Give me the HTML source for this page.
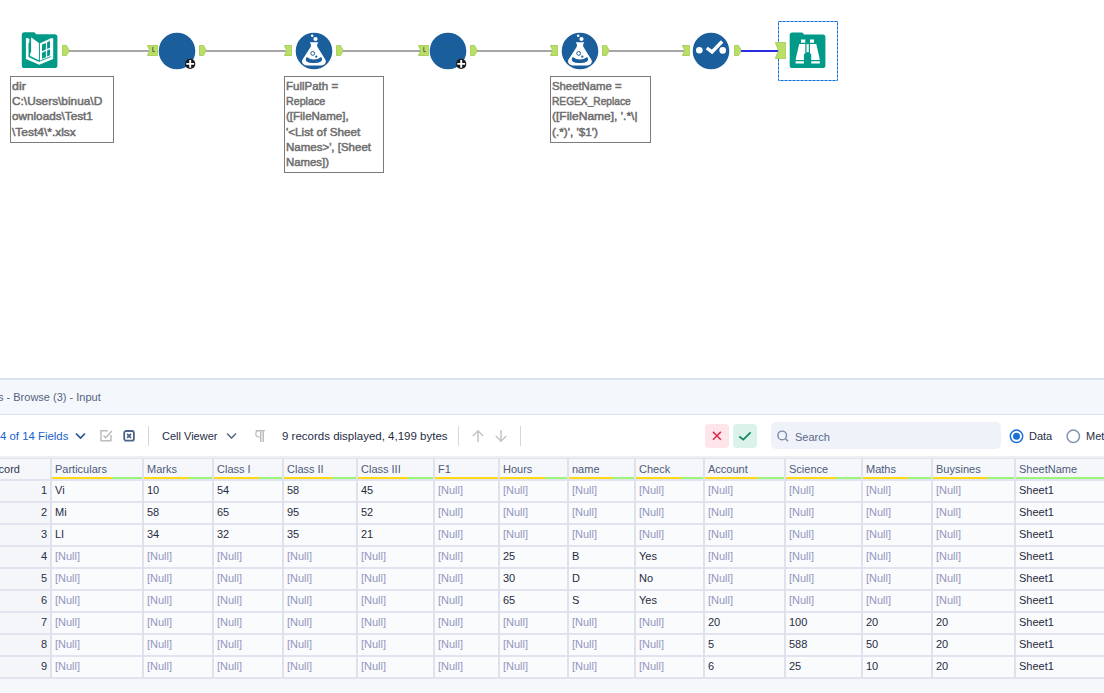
<!DOCTYPE html>
<html><head><meta charset="utf-8"><style>
html,body{margin:0;padding:0;width:1104px;height:693px;overflow:hidden;background:#fff;position:relative;font-family:'Liberation Sans', sans-serif}
</style></head><body>
<svg style="position:absolute;left:21px;top:32px" width="37" height="37" viewBox="0 0 37 37">
<path d="M0.8 3 Q0.8 0.2 3.6 0.2 H12.8 Q14.4 0.2 15 2.2 H33.6 Q36.4 2.2 36.4 5 V33.4 Q36.4 36.1 33.6 36.1 H3.6 Q0.8 36.1 0.8 33.4 Z" fill="#019a88"/>
<path d="M4.9 6.2 H7.5 V25.0 L18.2 29.9 L29.6 25.0 V6.2 H32.2 V27.1 L18.2 32.8 L4.9 27.1 Z" fill="#fff"/>
<path d="M5 6.2 L8.4 7.0 V10.6 L7.4 11.2 Z" fill="#fff"/>
<path d="M10.1 5.3 L17.9 10.9 V28.2 L9.2 24.1 V21 L10.1 20.2 Z" fill="#fff"/>
<path d="M18.9 11.3 L30.0 6.2 V25.4 L18.9 30.0 Z" fill="#fff"/>
<path d="M21.0 12.6 L24.9 10.9 V17.6 L21.0 19.2 Z M26.1 10.3 L29.0 9.0 V15.7 L26.1 16.9 Z M21.0 20.7 L24.9 19.1 V25.2 L21.0 26.8 Z M26.1 18.5 L29.0 17.3 V23.2 L26.1 24.4 Z" fill="#019a88"/>
<path d="M19.3 28.9 L29.7 24.6" stroke="#019a88" stroke-width="0.9"/>
</svg><svg style="position:absolute;left:62px;top:45px" width="8" height="11" viewBox="0 0 8 11"><path d="M0.5 0.5 H4.5 L7.3 5.5 L4.5 10.5 H0.5 Z" fill="#b9df66" stroke="#9fc84e" stroke-width="0.8"/></svg><div style="position:absolute;left:69px;top:50px;width:80px;height:2px;background:#a6a6a6"></div><svg style="position:absolute;left:147px;top:45px" width="11" height="11" viewBox="0 0 11 11"><path d="M0.3 0.5 H10.7 V10.5 H0.3 L2.8 5.5 Z" fill="#b9df66" stroke="#9fc84e" stroke-width="0.8"/><path d="M5.8 2.0 V6.6 H7.9" stroke="#4a5a48" stroke-width="0.9" fill="none"/></svg><svg style="position:absolute;left:156.6px;top:30.5px;overflow:visible" width="40" height="40" viewBox="0 0 40 40"><circle cx="20" cy="20" r="18.3" fill="#1a5e9c"/><circle cx="33.2" cy="32.9" r="5.1" fill="#1b1b1b"/><path d="M29.3 32.9 H37.1 M33.2 29.1 V36.7" stroke="#fff" stroke-width="1.9"/></svg><svg style="position:absolute;left:199px;top:45px" width="8" height="11" viewBox="0 0 8 11"><path d="M0.5 0.5 H4.5 L7.3 5.5 L4.5 10.5 H0.5 Z" fill="#b9df66" stroke="#9fc84e" stroke-width="0.8"/></svg><div style="position:absolute;left:206px;top:50px;width:80px;height:2px;background:#a6a6a6"></div><svg style="position:absolute;left:284px;top:45px" width="8" height="11" viewBox="0 0 8 11"><path d="M0.3 0.5 H7.7 V10.5 H0.3 L2.8 5.5 Z" fill="#b9df66" stroke="#9fc84e" stroke-width="0.8"/></svg><svg style="position:absolute;left:293.6px;top:30.5px;overflow:visible" width="40" height="40" viewBox="0 0 40 40"><circle cx="20" cy="20" r="18.3" fill="#1a5e9c"/><circle cx="18.2" cy="4.8" r="1.3" fill="#fff"/><circle cx="21.5" cy="8.0" r="2.1" fill="#fff"/><path d="M16.0 11.2 H24.1 V12.6 H23.2 V15.5 L31.4 28.8 Q32.6 31.5 30.5 33.3 Q29 34.5 26.5 34.5 H13.5 Q11 34.5 9.5 33.3 Q7.2 31.5 8.4 28.8 L16.9 15.5 V12.6 H16.0 Z" fill="#fff"/><path d="M12.8 25.9 Q19.8 31.3 27.2 25.9 Q29.0 28.5 27.0 30.5 Q24 32.2 19.6 32.0 Q15.2 32.2 12.6 30.5 Q10.8 28.5 12.8 25.9 Z" fill="#1a5e9c"/><circle cx="18.7" cy="22.4" r="1.9" fill="none" stroke="#1a5e9c" stroke-width="1"/><circle cx="22.3" cy="25.7" r="1.1" fill="#1a5e9c"/></svg><svg style="position:absolute;left:336px;top:45px" width="8" height="11" viewBox="0 0 8 11"><path d="M0.5 0.5 H4.5 L7.3 5.5 L4.5 10.5 H0.5 Z" fill="#b9df66" stroke="#9fc84e" stroke-width="0.8"/></svg><div style="position:absolute;left:343px;top:50px;width:78px;height:2px;background:#a6a6a6"></div><svg style="position:absolute;left:418px;top:45px" width="11" height="11" viewBox="0 0 11 11"><path d="M0.3 0.5 H10.7 V10.5 H0.3 L2.8 5.5 Z" fill="#b9df66" stroke="#9fc84e" stroke-width="0.8"/><path d="M5.8 2.0 V6.6 H7.9" stroke="#4a5a48" stroke-width="0.9" fill="none"/></svg><svg style="position:absolute;left:427.6px;top:30.5px;overflow:visible" width="40" height="40" viewBox="0 0 40 40"><circle cx="20" cy="20" r="18.3" fill="#1a5e9c"/><circle cx="33.2" cy="32.9" r="5.1" fill="#1b1b1b"/><path d="M29.3 32.9 H37.1 M33.2 29.1 V36.7" stroke="#fff" stroke-width="1.9"/></svg><svg style="position:absolute;left:470px;top:45px" width="8" height="11" viewBox="0 0 8 11"><path d="M0.5 0.5 H4.5 L7.3 5.5 L4.5 10.5 H0.5 Z" fill="#b9df66" stroke="#9fc84e" stroke-width="0.8"/></svg><div style="position:absolute;left:477px;top:50px;width:75px;height:2px;background:#a6a6a6"></div><svg style="position:absolute;left:550px;top:45px" width="8" height="11" viewBox="0 0 8 11"><path d="M0.3 0.5 H7.7 V10.5 H0.3 L2.8 5.5 Z" fill="#b9df66" stroke="#9fc84e" stroke-width="0.8"/></svg><svg style="position:absolute;left:559.5px;top:30.5px;overflow:visible" width="40" height="40" viewBox="0 0 40 40"><circle cx="20" cy="20" r="18.3" fill="#1a5e9c"/><circle cx="18.2" cy="4.8" r="1.3" fill="#fff"/><circle cx="21.5" cy="8.0" r="2.1" fill="#fff"/><path d="M16.0 11.2 H24.1 V12.6 H23.2 V15.5 L31.4 28.8 Q32.6 31.5 30.5 33.3 Q29 34.5 26.5 34.5 H13.5 Q11 34.5 9.5 33.3 Q7.2 31.5 8.4 28.8 L16.9 15.5 V12.6 H16.0 Z" fill="#fff"/><path d="M12.8 25.9 Q19.8 31.3 27.2 25.9 Q29.0 28.5 27.0 30.5 Q24 32.2 19.6 32.0 Q15.2 32.2 12.6 30.5 Q10.8 28.5 12.8 25.9 Z" fill="#1a5e9c"/><circle cx="18.7" cy="22.4" r="1.9" fill="none" stroke="#1a5e9c" stroke-width="1"/><circle cx="22.3" cy="25.7" r="1.1" fill="#1a5e9c"/></svg><svg style="position:absolute;left:602px;top:45px" width="8" height="11" viewBox="0 0 8 11"><path d="M0.5 0.5 H4.5 L7.3 5.5 L4.5 10.5 H0.5 Z" fill="#b9df66" stroke="#9fc84e" stroke-width="0.8"/></svg><div style="position:absolute;left:609px;top:50px;width:75px;height:2px;background:#a6a6a6"></div><svg style="position:absolute;left:682px;top:45px" width="8" height="11" viewBox="0 0 8 11"><path d="M0.3 0.5 H7.7 V10.5 H0.3 L2.8 5.5 Z" fill="#b9df66" stroke="#9fc84e" stroke-width="0.8"/></svg><svg style="position:absolute;left:691.4px;top:30.5px;overflow:visible" width="40" height="40" viewBox="0 0 40 40"><circle cx="20" cy="20" r="18.3" fill="#1a5e9c"/><circle cx="8.3" cy="19.2" r="3.3" fill="#fff"/><circle cx="31.7" cy="19.4" r="3.3" fill="#fff"/><path d="M15.8 17.0 L21.0 20.9 L31.1 10.5" stroke="#fff" stroke-width="3.4" fill="none" stroke-linecap="butt" stroke-linejoin="miter"/></svg><svg style="position:absolute;left:734px;top:45px" width="8" height="11" viewBox="0 0 8 11"><path d="M0.5 0.5 H4.5 L7.3 5.5 L4.5 10.5 H0.5 Z" fill="#b9df66" stroke="#9fc84e" stroke-width="0.8"/></svg><div style="position:absolute;left:741px;top:50px;width:38px;height:2px;background:#2b2de3"></div><svg style="position:absolute;left:770px;top:15px" width="80" height="75" viewBox="770 15 80 75"><rect x="778.5" y="21.5" width="59" height="59" fill="none" stroke="#c4ddf8" stroke-width="1"/><rect x="778.5" y="21.5" width="59" height="59" fill="none" stroke="#0f72e0" stroke-width="1" stroke-dasharray="3 1"/></svg><svg style="position:absolute;left:775px;top:42px" width="11" height="17" viewBox="0 0 11 17"><path d="M0.3 0.5 H10.7 V16.5 H0.3 L3.5 8.5 Z" fill="#b9df66" stroke="#9fc84e" stroke-width="0.8"/></svg><svg style="position:absolute;left:789px;top:32px" width="37" height="37" viewBox="0 0 37 37">
<path d="M0.7 3.2 Q0.7 0.6 3.3 0.6 H12.6 Q14.2 0.6 14.9 2.6 H33.8 Q36.4 2.6 36.4 5.2 V33.5 Q36.4 36.1 33.8 36.1 H3.3 Q0.7 36.1 0.7 33.5 Z" fill="#019a88"/>
<path d="M12 7.5 H16.3 V10.7 H12 Z M21 7.5 H25 V10.7 H21 Z" fill="#fff"/>
<path d="M10.2 11.9 H16.3 V21.8 H14.9 V28.1 H6.8 V26.5 Z" fill="#fff"/>
<path d="M21 11.9 H27.3 L30.6 26.5 V28.1 H22.2 V21.8 H21 Z" fill="#fff"/>
<path d="M17.5 12.2 H19.8 V20.2 H17.5 Z" fill="#fff"/>
<path d="M6.6 29.3 H14.9 V31.5 H6.6 Z M22.2 29.3 H30.8 V31.5 H22.2 Z" fill="#fff"/>
</svg><div style="position:absolute;left:10px;top:76px;width:104px;height:67px;border:1px solid #7b7b7b;box-sizing:border-box"></div><div style="position:absolute;left:12px;top:79.0px;font:11.5px 'Liberation Sans', sans-serif;-webkit-text-stroke:0.5px #6e6e6e;color:#6e6e6e;white-space:nowrap;line-height:15px;transform:scaleX(1.08);transform-origin:0 0">dir</div><div style="position:absolute;left:12px;top:94.2px;font:11.5px 'Liberation Sans', sans-serif;-webkit-text-stroke:0.5px #6e6e6e;color:#6e6e6e;white-space:nowrap;line-height:15px;transform:scaleX(1.03);transform-origin:0 0">C:\Users\binua\D</div><div style="position:absolute;left:12px;top:109.4px;font:11.5px 'Liberation Sans', sans-serif;-webkit-text-stroke:0.5px #6e6e6e;color:#6e6e6e;white-space:nowrap;line-height:15px;transform:scaleX(1.02);transform-origin:0 0">ownloads\Test1</div><div style="position:absolute;left:12px;top:124.6px;font:11.5px 'Liberation Sans', sans-serif;-webkit-text-stroke:0.5px #6e6e6e;color:#6e6e6e;white-space:nowrap;line-height:15px;transform:scaleX(1.04);transform-origin:0 0">\Test4\*.xlsx</div><div style="position:absolute;left:284px;top:76px;width:100px;height:97px;border:1px solid #7b7b7b;box-sizing:border-box"></div><div style="position:absolute;left:286px;top:79.0px;font:11.5px 'Liberation Sans', sans-serif;-webkit-text-stroke:0.5px #6e6e6e;color:#6e6e6e;white-space:nowrap;line-height:15px;transform:scaleX(1.0);transform-origin:0 0">FullPath =</div><div style="position:absolute;left:286px;top:94.2px;font:11.5px 'Liberation Sans', sans-serif;-webkit-text-stroke:0.5px #6e6e6e;color:#6e6e6e;white-space:nowrap;line-height:15px;transform:scaleX(0.93);transform-origin:0 0">Replace</div><div style="position:absolute;left:286px;top:109.4px;font:11.5px 'Liberation Sans', sans-serif;-webkit-text-stroke:0.5px #6e6e6e;color:#6e6e6e;white-space:nowrap;line-height:15px;transform:scaleX(1.0);transform-origin:0 0">([FileName],</div><div style="position:absolute;left:286px;top:124.6px;font:11.5px 'Liberation Sans', sans-serif;-webkit-text-stroke:0.5px #6e6e6e;color:#6e6e6e;white-space:nowrap;line-height:15px;transform:scaleX(1.02);transform-origin:0 0">'&lt;List of Sheet</div><div style="position:absolute;left:286px;top:139.8px;font:11.5px 'Liberation Sans', sans-serif;-webkit-text-stroke:0.5px #6e6e6e;color:#6e6e6e;white-space:nowrap;line-height:15px;transform:scaleX(1.0);transform-origin:0 0">Names&gt;', [Sheet</div><div style="position:absolute;left:286px;top:155.0px;font:11.5px 'Liberation Sans', sans-serif;-webkit-text-stroke:0.5px #6e6e6e;color:#6e6e6e;white-space:nowrap;line-height:15px;transform:scaleX(0.99);transform-origin:0 0">Names])</div><div style="position:absolute;left:550px;top:76px;width:101px;height:67px;border:1px solid #7b7b7b;box-sizing:border-box"></div><div style="position:absolute;left:552px;top:79.0px;font:11.5px 'Liberation Sans', sans-serif;-webkit-text-stroke:0.5px #6e6e6e;color:#6e6e6e;white-space:nowrap;line-height:15px;transform:scaleX(0.985);transform-origin:0 0">SheetName =</div><div style="position:absolute;left:552px;top:94.2px;font:11.5px 'Liberation Sans', sans-serif;-webkit-text-stroke:0.5px #6e6e6e;color:#6e6e6e;white-space:nowrap;line-height:15px;transform:scaleX(0.885);transform-origin:0 0">REGEX_Replace</div><div style="position:absolute;left:552px;top:109.4px;font:11.5px 'Liberation Sans', sans-serif;-webkit-text-stroke:0.5px #6e6e6e;color:#6e6e6e;white-space:nowrap;line-height:15px;transform:scaleX(1.045);transform-origin:0 0">([FileName], '.*\|</div><div style="position:absolute;left:552px;top:124.6px;font:11.5px 'Liberation Sans', sans-serif;-webkit-text-stroke:0.5px #6e6e6e;color:#6e6e6e;white-space:nowrap;line-height:15px;transform:scaleX(1.02);transform-origin:0 0">(.*)', '$1')</div>

<div style="position:absolute;left:0;top:378px;width:1104px;height:2px;background:#dde3ee"></div>
<div style="position:absolute;left:0;top:380px;width:1104px;height:34px;background:#f4f7fb"></div>
<div style="position:absolute;left:0;top:414px;width:1104px;height:1px;background:#dde3ee"></div>
<div style="position:absolute;left:-2px;top:391px;font:11px 'Liberation Sans', sans-serif;color:#56647f;white-space:nowrap">s - Browse (3) - Input</div>
<div style="position:absolute;left:0;top:430px;font:11.4px 'Liberation Sans', sans-serif;color:#1862cc;white-space:nowrap">4 of 14 Fields</div>
<svg style="position:absolute;left:75px;top:432px" width="11" height="8" viewBox="0 0 11 8"><path d="M1 1.5 L5.5 6 L10 1.5" stroke="#27528e" stroke-width="1.7" fill="none"/></svg>
<svg style="position:absolute;left:99px;top:429px" width="14" height="14" viewBox="0 0 14 14"><path d="M11.95 6.1 V11.85 H1.95 V1.85 H9" stroke="#bdbdbd" stroke-width="1.5" fill="none"/><path d="M4.5 6.6 L6.7 8.6 L12.9 2.1" stroke="#bdbdbd" stroke-width="1.5" fill="none"/></svg>
<svg style="position:absolute;left:123px;top:429px" width="14" height="14" viewBox="0 0 14 14"><rect x="1.2" y="2" width="9.7" height="9.7" rx="2" stroke="#4f6388" stroke-width="1.8" fill="none"/><path d="M4.1 4.9 L8 8.8 M8 4.9 L4.1 8.8" stroke="#4f6388" stroke-width="1.8"/></svg>
<div style="position:absolute;left:148px;top:426px;width:1px;height:20px;background:#cfd6e4"></div>
<div style="position:absolute;left:162px;top:430px;font:11px 'Liberation Sans', sans-serif;color:#262c45;white-space:nowrap">Cell Viewer</div>
<svg style="position:absolute;left:226px;top:432px" width="11" height="8" viewBox="0 0 11 8"><path d="M1 1.5 L5.5 6 L10 1.5" stroke="#4d5c7a" stroke-width="1.3" fill="none"/></svg>
<svg style="position:absolute;left:254px;top:429px" width="12" height="14" viewBox="0 0 12 14"><path d="M6.6 1.6 H9.4 V13 H6.6 Z" fill="#e4e4e4"/><path d="M1.5 1.6 H11" stroke="#bcbcbc" stroke-width="1.3"/><path d="M6.6 1.6 H5 A3.2 3.2 0 0 0 5 8 H6.6" stroke="#bcbcbc" stroke-width="1.2" fill="none"/><path d="M6.6 1.6 V13 M9.4 1.6 V13" stroke="#bcbcbc" stroke-width="1.1"/></svg>
<div style="position:absolute;left:282px;top:430px;font:11.5px 'Liberation Sans', sans-serif;color:#262c45;white-space:nowrap">9 records displayed, 4,199 bytes</div>
<div style="position:absolute;left:458px;top:426px;width:1px;height:20px;background:#cfd6e4"></div>
<svg style="position:absolute;left:471px;top:429px" width="14" height="14" viewBox="0 0 14 14"><path d="M7 13 V2 M1.8 7 L7 1.8 L12.2 7" stroke="#c2c4c8" stroke-width="1.5" fill="none"/></svg>
<svg style="position:absolute;left:494px;top:429px" width="14" height="14" viewBox="0 0 14 14"><path d="M7 1 V12 M1.8 7 L7 12.2 L12.2 7" stroke="#c2c4c8" stroke-width="1.5" fill="none"/></svg>
<div style="position:absolute;left:520px;top:426px;width:1px;height:20px;background:#cfd6e4"></div>
<div style="position:absolute;left:705px;top:424px;width:24px;height:24px;border-radius:4px;background:#fde5ea"></div>
<svg style="position:absolute;left:705px;top:424px" width="24" height="24" viewBox="0 0 24 24"><path d="M8.0 7.9 L15.9 15.8 M15.9 7.9 L8.0 15.8" stroke="#d72f4c" stroke-width="1.5"/></svg>
<div style="position:absolute;left:733px;top:424px;width:24px;height:24px;border-radius:4px;background:#dbf2ea"></div>
<svg style="position:absolute;left:733px;top:424px" width="24" height="24" viewBox="0 0 24 24"><path d="M6.3 12.5 L10.3 15.6 L17.6 8.4" stroke="#12875d" stroke-width="1.75" fill="none"/></svg>
<div style="position:absolute;left:771px;top:422px;width:230px;height:27px;border-radius:5px;background:#eff2f8"></div>
<svg style="position:absolute;left:776px;top:429px" width="14" height="14" viewBox="0 0 14 14"><circle cx="6.2" cy="6.4" r="4.3" stroke="#7b8dac" stroke-width="1.4" fill="none"/><path d="M9.3 9.5 L12 12.2" stroke="#7b8dac" stroke-width="1.5"/></svg>
<div style="position:absolute;left:795px;top:431px;font:11px 'Liberation Sans', sans-serif;color:#5a6988;white-space:nowrap">Search</div>
<svg style="position:absolute;left:1008px;top:428px" width="17" height="17" viewBox="0 0 17 17"><circle cx="8.5" cy="8.3" r="6.2" stroke="#1b6fd6" stroke-width="1.5" fill="#fff"/><circle cx="8.5" cy="8.3" r="3.5" fill="#1b6fd6"/></svg>
<div style="position:absolute;left:1029px;top:430px;font:11px 'Liberation Sans', sans-serif;color:#262c45;white-space:nowrap">Data</div>
<svg style="position:absolute;left:1065px;top:428px" width="17" height="17" viewBox="0 0 17 17"><circle cx="8.3" cy="8.3" r="6.2" stroke="#8393b2" stroke-width="1.5" fill="#fff"/></svg>
<div style="position:absolute;left:1086px;top:430px;font:11px 'Liberation Sans', sans-serif;color:#262c45;white-space:nowrap">Metadata</div>
<div style="position:absolute;left:0;top:678px;width:1104px;height:15px;background:#f5f7fb"></div>

<div style="position:absolute;left:0;top:458px;width:1104px;height:22px;background:#f5f7fb"></div><div style="position:absolute;left:51px;top:480px;width:1053px;height:198px;background:#fafbfd"></div><div style="position:absolute;left:0;top:480px;width:51px;height:198px;background:#f4f6fa"></div><div style="position:absolute;left:0;top:456px;width:1104px;height:2px;background:#efeff2"></div><div style="position:absolute;left:0;top:458px;width:1104px;height:1px;background:#dde2ec"></div><div style="position:absolute;left:0;top:479px;width:1104px;height:2px;background:#dfe4ee"></div><div style="position:absolute;left:0;top:501px;width:1104px;height:2px;background:#dfe4ee"></div><div style="position:absolute;left:0;top:523px;width:1104px;height:2px;background:#dfe4ee"></div><div style="position:absolute;left:0;top:545px;width:1104px;height:2px;background:#dfe4ee"></div><div style="position:absolute;left:0;top:567px;width:1104px;height:2px;background:#dfe4ee"></div><div style="position:absolute;left:0;top:589px;width:1104px;height:2px;background:#dfe4ee"></div><div style="position:absolute;left:0;top:611px;width:1104px;height:2px;background:#dfe4ee"></div><div style="position:absolute;left:0;top:633px;width:1104px;height:2px;background:#dfe4ee"></div><div style="position:absolute;left:0;top:655px;width:1104px;height:2px;background:#dfe4ee"></div><div style="position:absolute;left:0;top:677px;width:1104px;height:2px;background:#dfe4ee"></div><div style="position:absolute;left:50px;top:458px;width:2px;height:220px;background:#dde2ec"></div><div style="position:absolute;left:142px;top:458px;width:2px;height:220px;background:#dde2ec"></div><div style="position:absolute;left:212px;top:458px;width:2px;height:220px;background:#dde2ec"></div><div style="position:absolute;left:282px;top:458px;width:2px;height:220px;background:#dde2ec"></div><div style="position:absolute;left:356px;top:458px;width:2px;height:220px;background:#dde2ec"></div><div style="position:absolute;left:433px;top:458px;width:2px;height:220px;background:#dde2ec"></div><div style="position:absolute;left:498px;top:458px;width:2px;height:220px;background:#dde2ec"></div><div style="position:absolute;left:567px;top:458px;width:2px;height:220px;background:#dde2ec"></div><div style="position:absolute;left:634px;top:458px;width:2px;height:220px;background:#dde2ec"></div><div style="position:absolute;left:703px;top:458px;width:2px;height:220px;background:#dde2ec"></div><div style="position:absolute;left:784px;top:458px;width:2px;height:220px;background:#dde2ec"></div><div style="position:absolute;left:861px;top:458px;width:2px;height:220px;background:#dde2ec"></div><div style="position:absolute;left:931px;top:458px;width:2px;height:220px;background:#dde2ec"></div><div style="position:absolute;left:1014px;top:458px;width:2px;height:220px;background:#dde2ec"></div><div style="position:absolute;left:55px;top:463px;font:11px 'Liberation Sans', sans-serif;color:#4e5b7a;white-space:nowrap">Particulars</div><div style="position:absolute;left:52px;top:477px;width:60px;height:2px;background:#ffd916"></div><div style="position:absolute;left:112px;top:477px;width:30px;height:2px;background:#9cf577"></div><div style="position:absolute;left:147px;top:463px;font:11px 'Liberation Sans', sans-serif;color:#4e5b7a;white-space:nowrap">Marks</div><div style="position:absolute;left:144px;top:477px;width:45px;height:2px;background:#ffd916"></div><div style="position:absolute;left:189px;top:477px;width:23px;height:2px;background:#9cf577"></div><div style="position:absolute;left:217px;top:463px;font:11px 'Liberation Sans', sans-serif;color:#4e5b7a;white-space:nowrap">Class I</div><div style="position:absolute;left:214px;top:477px;width:45px;height:2px;background:#ffd916"></div><div style="position:absolute;left:259px;top:477px;width:23px;height:2px;background:#9cf577"></div><div style="position:absolute;left:287px;top:463px;font:11px 'Liberation Sans', sans-serif;color:#4e5b7a;white-space:nowrap">Class II</div><div style="position:absolute;left:284px;top:477px;width:48px;height:2px;background:#ffd916"></div><div style="position:absolute;left:332px;top:477px;width:24px;height:2px;background:#9cf577"></div><div style="position:absolute;left:361px;top:463px;font:11px 'Liberation Sans', sans-serif;color:#4e5b7a;white-space:nowrap">Class III</div><div style="position:absolute;left:358px;top:477px;width:50px;height:2px;background:#ffd916"></div><div style="position:absolute;left:408px;top:477px;width:25px;height:2px;background:#9cf577"></div><div style="position:absolute;left:438px;top:463px;font:11px 'Liberation Sans', sans-serif;color:#4e5b7a;white-space:nowrap">F1</div><div style="position:absolute;left:435px;top:477px;width:63px;height:2px;background:#ffd916"></div><div style="position:absolute;left:503px;top:463px;font:11px 'Liberation Sans', sans-serif;color:#4e5b7a;white-space:nowrap">Hours</div><div style="position:absolute;left:500px;top:477px;width:45px;height:2px;background:#ffd916"></div><div style="position:absolute;left:545px;top:477px;width:22px;height:2px;background:#9cf577"></div><div style="position:absolute;left:572px;top:463px;font:11px 'Liberation Sans', sans-serif;color:#4e5b7a;white-space:nowrap">name</div><div style="position:absolute;left:569px;top:477px;width:43px;height:2px;background:#ffd916"></div><div style="position:absolute;left:612px;top:477px;width:22px;height:2px;background:#9cf577"></div><div style="position:absolute;left:639px;top:463px;font:11px 'Liberation Sans', sans-serif;color:#4e5b7a;white-space:nowrap">Check</div><div style="position:absolute;left:636px;top:477px;width:45px;height:2px;background:#ffd916"></div><div style="position:absolute;left:681px;top:477px;width:22px;height:2px;background:#9cf577"></div><div style="position:absolute;left:708px;top:463px;font:11px 'Liberation Sans', sans-serif;color:#4e5b7a;white-space:nowrap">Account</div><div style="position:absolute;left:705px;top:477px;width:53px;height:2px;background:#ffd916"></div><div style="position:absolute;left:758px;top:477px;width:26px;height:2px;background:#9cf577"></div><div style="position:absolute;left:789px;top:463px;font:11px 'Liberation Sans', sans-serif;color:#4e5b7a;white-space:nowrap">Science</div><div style="position:absolute;left:786px;top:477px;width:50px;height:2px;background:#ffd916"></div><div style="position:absolute;left:836px;top:477px;width:25px;height:2px;background:#9cf577"></div><div style="position:absolute;left:866px;top:463px;font:11px 'Liberation Sans', sans-serif;color:#4e5b7a;white-space:nowrap">Maths</div><div style="position:absolute;left:863px;top:477px;width:45px;height:2px;background:#ffd916"></div><div style="position:absolute;left:908px;top:477px;width:23px;height:2px;background:#9cf577"></div><div style="position:absolute;left:936px;top:463px;font:11px 'Liberation Sans', sans-serif;color:#4e5b7a;white-space:nowrap">Buysines</div><div style="position:absolute;left:933px;top:477px;width:54px;height:2px;background:#ffd916"></div><div style="position:absolute;left:987px;top:477px;width:27px;height:2px;background:#9cf577"></div><div style="position:absolute;left:1019px;top:463px;font:11px 'Liberation Sans', sans-serif;color:#4e5b7a;white-space:nowrap">SheetName</div><div style="position:absolute;left:1016px;top:477px;width:184px;height:2px;background:#9cf577"></div><div style="position:absolute;right:1084px;top:463px;font:11px 'Liberation Sans', sans-serif;color:#2f3550;white-space:nowrap">Record</div><div style="position:absolute;right:1057px;top:484px;font:11px 'Liberation Sans', sans-serif;color:#2a2f45;white-space:nowrap">1</div><div style="position:absolute;left:55px;top:484px;font:11px 'Liberation Sans', sans-serif;color:#262b40;white-space:nowrap">Vi</div><div style="position:absolute;left:147px;top:484px;font:11px 'Liberation Sans', sans-serif;color:#262b40;white-space:nowrap">10</div><div style="position:absolute;left:217px;top:484px;font:11px 'Liberation Sans', sans-serif;color:#262b40;white-space:nowrap">54</div><div style="position:absolute;left:287px;top:484px;font:11px 'Liberation Sans', sans-serif;color:#262b40;white-space:nowrap">58</div><div style="position:absolute;left:361px;top:484px;font:11px 'Liberation Sans', sans-serif;color:#262b40;white-space:nowrap">45</div><div style="position:absolute;left:438px;top:484px;font:11px 'Liberation Sans', sans-serif;color:#9297bd;white-space:nowrap">[Null]</div><div style="position:absolute;left:503px;top:484px;font:11px 'Liberation Sans', sans-serif;color:#9297bd;white-space:nowrap">[Null]</div><div style="position:absolute;left:572px;top:484px;font:11px 'Liberation Sans', sans-serif;color:#9297bd;white-space:nowrap">[Null]</div><div style="position:absolute;left:639px;top:484px;font:11px 'Liberation Sans', sans-serif;color:#9297bd;white-space:nowrap">[Null]</div><div style="position:absolute;left:708px;top:484px;font:11px 'Liberation Sans', sans-serif;color:#9297bd;white-space:nowrap">[Null]</div><div style="position:absolute;left:789px;top:484px;font:11px 'Liberation Sans', sans-serif;color:#9297bd;white-space:nowrap">[Null]</div><div style="position:absolute;left:866px;top:484px;font:11px 'Liberation Sans', sans-serif;color:#9297bd;white-space:nowrap">[Null]</div><div style="position:absolute;left:936px;top:484px;font:11px 'Liberation Sans', sans-serif;color:#9297bd;white-space:nowrap">[Null]</div><div style="position:absolute;left:1019px;top:484px;font:11px 'Liberation Sans', sans-serif;color:#262b40;white-space:nowrap">Sheet1</div><div style="position:absolute;right:1057px;top:506px;font:11px 'Liberation Sans', sans-serif;color:#2a2f45;white-space:nowrap">2</div><div style="position:absolute;left:55px;top:506px;font:11px 'Liberation Sans', sans-serif;color:#262b40;white-space:nowrap">Mi</div><div style="position:absolute;left:147px;top:506px;font:11px 'Liberation Sans', sans-serif;color:#262b40;white-space:nowrap">58</div><div style="position:absolute;left:217px;top:506px;font:11px 'Liberation Sans', sans-serif;color:#262b40;white-space:nowrap">65</div><div style="position:absolute;left:287px;top:506px;font:11px 'Liberation Sans', sans-serif;color:#262b40;white-space:nowrap">95</div><div style="position:absolute;left:361px;top:506px;font:11px 'Liberation Sans', sans-serif;color:#262b40;white-space:nowrap">52</div><div style="position:absolute;left:438px;top:506px;font:11px 'Liberation Sans', sans-serif;color:#9297bd;white-space:nowrap">[Null]</div><div style="position:absolute;left:503px;top:506px;font:11px 'Liberation Sans', sans-serif;color:#9297bd;white-space:nowrap">[Null]</div><div style="position:absolute;left:572px;top:506px;font:11px 'Liberation Sans', sans-serif;color:#9297bd;white-space:nowrap">[Null]</div><div style="position:absolute;left:639px;top:506px;font:11px 'Liberation Sans', sans-serif;color:#9297bd;white-space:nowrap">[Null]</div><div style="position:absolute;left:708px;top:506px;font:11px 'Liberation Sans', sans-serif;color:#9297bd;white-space:nowrap">[Null]</div><div style="position:absolute;left:789px;top:506px;font:11px 'Liberation Sans', sans-serif;color:#9297bd;white-space:nowrap">[Null]</div><div style="position:absolute;left:866px;top:506px;font:11px 'Liberation Sans', sans-serif;color:#9297bd;white-space:nowrap">[Null]</div><div style="position:absolute;left:936px;top:506px;font:11px 'Liberation Sans', sans-serif;color:#9297bd;white-space:nowrap">[Null]</div><div style="position:absolute;left:1019px;top:506px;font:11px 'Liberation Sans', sans-serif;color:#262b40;white-space:nowrap">Sheet1</div><div style="position:absolute;right:1057px;top:528px;font:11px 'Liberation Sans', sans-serif;color:#2a2f45;white-space:nowrap">3</div><div style="position:absolute;left:55px;top:528px;font:11px 'Liberation Sans', sans-serif;color:#262b40;white-space:nowrap">LI</div><div style="position:absolute;left:147px;top:528px;font:11px 'Liberation Sans', sans-serif;color:#262b40;white-space:nowrap">34</div><div style="position:absolute;left:217px;top:528px;font:11px 'Liberation Sans', sans-serif;color:#262b40;white-space:nowrap">32</div><div style="position:absolute;left:287px;top:528px;font:11px 'Liberation Sans', sans-serif;color:#262b40;white-space:nowrap">35</div><div style="position:absolute;left:361px;top:528px;font:11px 'Liberation Sans', sans-serif;color:#262b40;white-space:nowrap">21</div><div style="position:absolute;left:438px;top:528px;font:11px 'Liberation Sans', sans-serif;color:#9297bd;white-space:nowrap">[Null]</div><div style="position:absolute;left:503px;top:528px;font:11px 'Liberation Sans', sans-serif;color:#9297bd;white-space:nowrap">[Null]</div><div style="position:absolute;left:572px;top:528px;font:11px 'Liberation Sans', sans-serif;color:#9297bd;white-space:nowrap">[Null]</div><div style="position:absolute;left:639px;top:528px;font:11px 'Liberation Sans', sans-serif;color:#9297bd;white-space:nowrap">[Null]</div><div style="position:absolute;left:708px;top:528px;font:11px 'Liberation Sans', sans-serif;color:#9297bd;white-space:nowrap">[Null]</div><div style="position:absolute;left:789px;top:528px;font:11px 'Liberation Sans', sans-serif;color:#9297bd;white-space:nowrap">[Null]</div><div style="position:absolute;left:866px;top:528px;font:11px 'Liberation Sans', sans-serif;color:#9297bd;white-space:nowrap">[Null]</div><div style="position:absolute;left:936px;top:528px;font:11px 'Liberation Sans', sans-serif;color:#9297bd;white-space:nowrap">[Null]</div><div style="position:absolute;left:1019px;top:528px;font:11px 'Liberation Sans', sans-serif;color:#262b40;white-space:nowrap">Sheet1</div><div style="position:absolute;right:1057px;top:550px;font:11px 'Liberation Sans', sans-serif;color:#2a2f45;white-space:nowrap">4</div><div style="position:absolute;left:55px;top:550px;font:11px 'Liberation Sans', sans-serif;color:#9297bd;white-space:nowrap">[Null]</div><div style="position:absolute;left:147px;top:550px;font:11px 'Liberation Sans', sans-serif;color:#9297bd;white-space:nowrap">[Null]</div><div style="position:absolute;left:217px;top:550px;font:11px 'Liberation Sans', sans-serif;color:#9297bd;white-space:nowrap">[Null]</div><div style="position:absolute;left:287px;top:550px;font:11px 'Liberation Sans', sans-serif;color:#9297bd;white-space:nowrap">[Null]</div><div style="position:absolute;left:361px;top:550px;font:11px 'Liberation Sans', sans-serif;color:#9297bd;white-space:nowrap">[Null]</div><div style="position:absolute;left:438px;top:550px;font:11px 'Liberation Sans', sans-serif;color:#9297bd;white-space:nowrap">[Null]</div><div style="position:absolute;left:503px;top:550px;font:11px 'Liberation Sans', sans-serif;color:#262b40;white-space:nowrap">25</div><div style="position:absolute;left:572px;top:550px;font:11px 'Liberation Sans', sans-serif;color:#262b40;white-space:nowrap">B</div><div style="position:absolute;left:639px;top:550px;font:11px 'Liberation Sans', sans-serif;color:#262b40;white-space:nowrap">Yes</div><div style="position:absolute;left:708px;top:550px;font:11px 'Liberation Sans', sans-serif;color:#9297bd;white-space:nowrap">[Null]</div><div style="position:absolute;left:789px;top:550px;font:11px 'Liberation Sans', sans-serif;color:#9297bd;white-space:nowrap">[Null]</div><div style="position:absolute;left:866px;top:550px;font:11px 'Liberation Sans', sans-serif;color:#9297bd;white-space:nowrap">[Null]</div><div style="position:absolute;left:936px;top:550px;font:11px 'Liberation Sans', sans-serif;color:#9297bd;white-space:nowrap">[Null]</div><div style="position:absolute;left:1019px;top:550px;font:11px 'Liberation Sans', sans-serif;color:#262b40;white-space:nowrap">Sheet1</div><div style="position:absolute;right:1057px;top:572px;font:11px 'Liberation Sans', sans-serif;color:#2a2f45;white-space:nowrap">5</div><div style="position:absolute;left:55px;top:572px;font:11px 'Liberation Sans', sans-serif;color:#9297bd;white-space:nowrap">[Null]</div><div style="position:absolute;left:147px;top:572px;font:11px 'Liberation Sans', sans-serif;color:#9297bd;white-space:nowrap">[Null]</div><div style="position:absolute;left:217px;top:572px;font:11px 'Liberation Sans', sans-serif;color:#9297bd;white-space:nowrap">[Null]</div><div style="position:absolute;left:287px;top:572px;font:11px 'Liberation Sans', sans-serif;color:#9297bd;white-space:nowrap">[Null]</div><div style="position:absolute;left:361px;top:572px;font:11px 'Liberation Sans', sans-serif;color:#9297bd;white-space:nowrap">[Null]</div><div style="position:absolute;left:438px;top:572px;font:11px 'Liberation Sans', sans-serif;color:#9297bd;white-space:nowrap">[Null]</div><div style="position:absolute;left:503px;top:572px;font:11px 'Liberation Sans', sans-serif;color:#262b40;white-space:nowrap">30</div><div style="position:absolute;left:572px;top:572px;font:11px 'Liberation Sans', sans-serif;color:#262b40;white-space:nowrap">D</div><div style="position:absolute;left:639px;top:572px;font:11px 'Liberation Sans', sans-serif;color:#262b40;white-space:nowrap">No</div><div style="position:absolute;left:708px;top:572px;font:11px 'Liberation Sans', sans-serif;color:#9297bd;white-space:nowrap">[Null]</div><div style="position:absolute;left:789px;top:572px;font:11px 'Liberation Sans', sans-serif;color:#9297bd;white-space:nowrap">[Null]</div><div style="position:absolute;left:866px;top:572px;font:11px 'Liberation Sans', sans-serif;color:#9297bd;white-space:nowrap">[Null]</div><div style="position:absolute;left:936px;top:572px;font:11px 'Liberation Sans', sans-serif;color:#9297bd;white-space:nowrap">[Null]</div><div style="position:absolute;left:1019px;top:572px;font:11px 'Liberation Sans', sans-serif;color:#262b40;white-space:nowrap">Sheet1</div><div style="position:absolute;right:1057px;top:594px;font:11px 'Liberation Sans', sans-serif;color:#2a2f45;white-space:nowrap">6</div><div style="position:absolute;left:55px;top:594px;font:11px 'Liberation Sans', sans-serif;color:#9297bd;white-space:nowrap">[Null]</div><div style="position:absolute;left:147px;top:594px;font:11px 'Liberation Sans', sans-serif;color:#9297bd;white-space:nowrap">[Null]</div><div style="position:absolute;left:217px;top:594px;font:11px 'Liberation Sans', sans-serif;color:#9297bd;white-space:nowrap">[Null]</div><div style="position:absolute;left:287px;top:594px;font:11px 'Liberation Sans', sans-serif;color:#9297bd;white-space:nowrap">[Null]</div><div style="position:absolute;left:361px;top:594px;font:11px 'Liberation Sans', sans-serif;color:#9297bd;white-space:nowrap">[Null]</div><div style="position:absolute;left:438px;top:594px;font:11px 'Liberation Sans', sans-serif;color:#9297bd;white-space:nowrap">[Null]</div><div style="position:absolute;left:503px;top:594px;font:11px 'Liberation Sans', sans-serif;color:#262b40;white-space:nowrap">65</div><div style="position:absolute;left:572px;top:594px;font:11px 'Liberation Sans', sans-serif;color:#262b40;white-space:nowrap">S</div><div style="position:absolute;left:639px;top:594px;font:11px 'Liberation Sans', sans-serif;color:#262b40;white-space:nowrap">Yes</div><div style="position:absolute;left:708px;top:594px;font:11px 'Liberation Sans', sans-serif;color:#9297bd;white-space:nowrap">[Null]</div><div style="position:absolute;left:789px;top:594px;font:11px 'Liberation Sans', sans-serif;color:#9297bd;white-space:nowrap">[Null]</div><div style="position:absolute;left:866px;top:594px;font:11px 'Liberation Sans', sans-serif;color:#9297bd;white-space:nowrap">[Null]</div><div style="position:absolute;left:936px;top:594px;font:11px 'Liberation Sans', sans-serif;color:#9297bd;white-space:nowrap">[Null]</div><div style="position:absolute;left:1019px;top:594px;font:11px 'Liberation Sans', sans-serif;color:#262b40;white-space:nowrap">Sheet1</div><div style="position:absolute;right:1057px;top:616px;font:11px 'Liberation Sans', sans-serif;color:#2a2f45;white-space:nowrap">7</div><div style="position:absolute;left:55px;top:616px;font:11px 'Liberation Sans', sans-serif;color:#9297bd;white-space:nowrap">[Null]</div><div style="position:absolute;left:147px;top:616px;font:11px 'Liberation Sans', sans-serif;color:#9297bd;white-space:nowrap">[Null]</div><div style="position:absolute;left:217px;top:616px;font:11px 'Liberation Sans', sans-serif;color:#9297bd;white-space:nowrap">[Null]</div><div style="position:absolute;left:287px;top:616px;font:11px 'Liberation Sans', sans-serif;color:#9297bd;white-space:nowrap">[Null]</div><div style="position:absolute;left:361px;top:616px;font:11px 'Liberation Sans', sans-serif;color:#9297bd;white-space:nowrap">[Null]</div><div style="position:absolute;left:438px;top:616px;font:11px 'Liberation Sans', sans-serif;color:#9297bd;white-space:nowrap">[Null]</div><div style="position:absolute;left:503px;top:616px;font:11px 'Liberation Sans', sans-serif;color:#9297bd;white-space:nowrap">[Null]</div><div style="position:absolute;left:572px;top:616px;font:11px 'Liberation Sans', sans-serif;color:#9297bd;white-space:nowrap">[Null]</div><div style="position:absolute;left:639px;top:616px;font:11px 'Liberation Sans', sans-serif;color:#9297bd;white-space:nowrap">[Null]</div><div style="position:absolute;left:708px;top:616px;font:11px 'Liberation Sans', sans-serif;color:#262b40;white-space:nowrap">20</div><div style="position:absolute;left:789px;top:616px;font:11px 'Liberation Sans', sans-serif;color:#262b40;white-space:nowrap">100</div><div style="position:absolute;left:866px;top:616px;font:11px 'Liberation Sans', sans-serif;color:#262b40;white-space:nowrap">20</div><div style="position:absolute;left:936px;top:616px;font:11px 'Liberation Sans', sans-serif;color:#262b40;white-space:nowrap">20</div><div style="position:absolute;left:1019px;top:616px;font:11px 'Liberation Sans', sans-serif;color:#262b40;white-space:nowrap">Sheet1</div><div style="position:absolute;right:1057px;top:638px;font:11px 'Liberation Sans', sans-serif;color:#2a2f45;white-space:nowrap">8</div><div style="position:absolute;left:55px;top:638px;font:11px 'Liberation Sans', sans-serif;color:#9297bd;white-space:nowrap">[Null]</div><div style="position:absolute;left:147px;top:638px;font:11px 'Liberation Sans', sans-serif;color:#9297bd;white-space:nowrap">[Null]</div><div style="position:absolute;left:217px;top:638px;font:11px 'Liberation Sans', sans-serif;color:#9297bd;white-space:nowrap">[Null]</div><div style="position:absolute;left:287px;top:638px;font:11px 'Liberation Sans', sans-serif;color:#9297bd;white-space:nowrap">[Null]</div><div style="position:absolute;left:361px;top:638px;font:11px 'Liberation Sans', sans-serif;color:#9297bd;white-space:nowrap">[Null]</div><div style="position:absolute;left:438px;top:638px;font:11px 'Liberation Sans', sans-serif;color:#9297bd;white-space:nowrap">[Null]</div><div style="position:absolute;left:503px;top:638px;font:11px 'Liberation Sans', sans-serif;color:#9297bd;white-space:nowrap">[Null]</div><div style="position:absolute;left:572px;top:638px;font:11px 'Liberation Sans', sans-serif;color:#9297bd;white-space:nowrap">[Null]</div><div style="position:absolute;left:639px;top:638px;font:11px 'Liberation Sans', sans-serif;color:#9297bd;white-space:nowrap">[Null]</div><div style="position:absolute;left:708px;top:638px;font:11px 'Liberation Sans', sans-serif;color:#262b40;white-space:nowrap">5</div><div style="position:absolute;left:789px;top:638px;font:11px 'Liberation Sans', sans-serif;color:#262b40;white-space:nowrap">588</div><div style="position:absolute;left:866px;top:638px;font:11px 'Liberation Sans', sans-serif;color:#262b40;white-space:nowrap">50</div><div style="position:absolute;left:936px;top:638px;font:11px 'Liberation Sans', sans-serif;color:#262b40;white-space:nowrap">20</div><div style="position:absolute;left:1019px;top:638px;font:11px 'Liberation Sans', sans-serif;color:#262b40;white-space:nowrap">Sheet1</div><div style="position:absolute;right:1057px;top:660px;font:11px 'Liberation Sans', sans-serif;color:#2a2f45;white-space:nowrap">9</div><div style="position:absolute;left:55px;top:660px;font:11px 'Liberation Sans', sans-serif;color:#9297bd;white-space:nowrap">[Null]</div><div style="position:absolute;left:147px;top:660px;font:11px 'Liberation Sans', sans-serif;color:#9297bd;white-space:nowrap">[Null]</div><div style="position:absolute;left:217px;top:660px;font:11px 'Liberation Sans', sans-serif;color:#9297bd;white-space:nowrap">[Null]</div><div style="position:absolute;left:287px;top:660px;font:11px 'Liberation Sans', sans-serif;color:#9297bd;white-space:nowrap">[Null]</div><div style="position:absolute;left:361px;top:660px;font:11px 'Liberation Sans', sans-serif;color:#9297bd;white-space:nowrap">[Null]</div><div style="position:absolute;left:438px;top:660px;font:11px 'Liberation Sans', sans-serif;color:#9297bd;white-space:nowrap">[Null]</div><div style="position:absolute;left:503px;top:660px;font:11px 'Liberation Sans', sans-serif;color:#9297bd;white-space:nowrap">[Null]</div><div style="position:absolute;left:572px;top:660px;font:11px 'Liberation Sans', sans-serif;color:#9297bd;white-space:nowrap">[Null]</div><div style="position:absolute;left:639px;top:660px;font:11px 'Liberation Sans', sans-serif;color:#9297bd;white-space:nowrap">[Null]</div><div style="position:absolute;left:708px;top:660px;font:11px 'Liberation Sans', sans-serif;color:#262b40;white-space:nowrap">6</div><div style="position:absolute;left:789px;top:660px;font:11px 'Liberation Sans', sans-serif;color:#262b40;white-space:nowrap">25</div><div style="position:absolute;left:866px;top:660px;font:11px 'Liberation Sans', sans-serif;color:#262b40;white-space:nowrap">10</div><div style="position:absolute;left:936px;top:660px;font:11px 'Liberation Sans', sans-serif;color:#262b40;white-space:nowrap">20</div><div style="position:absolute;left:1019px;top:660px;font:11px 'Liberation Sans', sans-serif;color:#262b40;white-space:nowrap">Sheet1</div>
</body></html>
